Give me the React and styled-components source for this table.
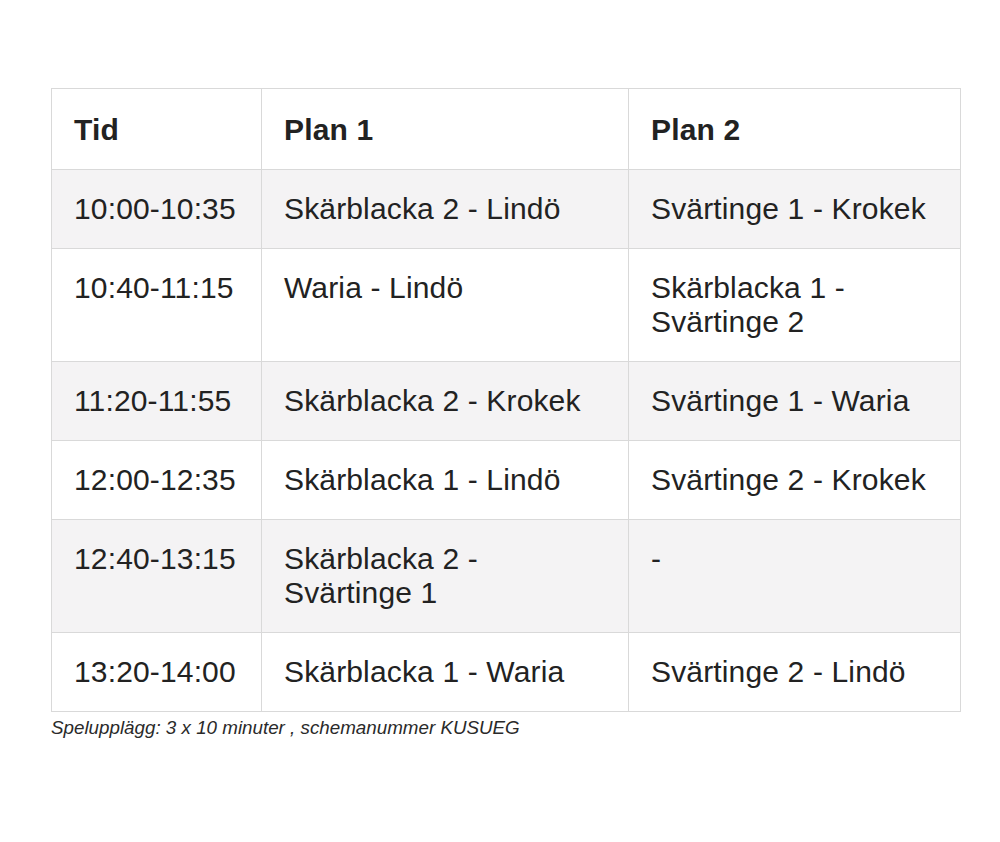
import React from 'react'
import styled, { createGlobalStyle } from 'styled-components'

const GlobalStyle = createGlobalStyle`
  html, body {
    margin: 0;
    padding: 0;
    background: #ffffff;
  }
  body {
    font-family: "Liberation Sans", Arial, sans-serif;
    color: #222222;
  }
`

const Page = styled.div`
  width: 1000px;
  height: 842px;
  padding: 88px 40px 0 51px;
  box-sizing: border-box;
`

const Table = styled.table`
  width: 909px;
  border-collapse: collapse;
  table-layout: fixed;
`

const Row = styled.tr`
  background: ${props => props.shaded ? '#f4f3f4' : '#ffffff'};
`

const HeadCell = styled.th`
  border: 1px solid #d9d9d9;
  padding: 24px 22px 22px;
  font-size: 30px;
  line-height: 34px;
  letter-spacing: 0.15px;
  font-weight: bold;
  text-align: left;
  vertical-align: top;
`

const Cell = styled.td`
  border: 1px solid #d9d9d9;
  padding: 22px 22px;
  font-size: 30px;
  line-height: 34px;
  letter-spacing: 0.15px;
  text-align: left;
  vertical-align: top;
`

const Caption = styled.p`
  margin: 5px 0 0;
  font-size: 18.8px;
  font-style: italic;
  color: #2a2a2a;
`

const matches = [
  ['10:00-10:35', 'Skärblacka 2 - Lindö', 'Svärtinge 1 - Krokek'],
  ['10:40-11:15', 'Waria - Lindö', 'Skärblacka 1 - Svärtinge 2'],
  ['11:20-11:55', 'Skärblacka 2 - Krokek', 'Svärtinge 1 - Waria'],
  ['12:00-12:35', 'Skärblacka 1 - Lindö', 'Svärtinge 2 - Krokek'],
  ['12:40-13:15', 'Skärblacka 2 - Svärtinge 1', '-'],
  ['13:20-14:00', 'Skärblacka 1 - Waria', 'Svärtinge 2 - Lindö']
]

const App = () =>
  <Page>
    <GlobalStyle />
    <Table>
      <colgroup>
        <col style={{ width: 210 }} />
        <col style={{ width: 367 }} />
        <col style={{ width: 332 }} />
      </colgroup>
      <thead>
        <Row>
          <HeadCell>Tid</HeadCell>
          <HeadCell>Plan 1</HeadCell>
          <HeadCell>Plan 2</HeadCell>
        </Row>
      </thead>
      <tbody>
        {matches.map((m, i) =>
          <Row key={m[0]} shaded={i % 2 === 0}>
            <Cell>{m[0]}</Cell>
            <Cell>{m[1]}</Cell>
            <Cell>{m[2]}</Cell>
          </Row>
        )}
      </tbody>
    </Table>
    <Caption>Spelupplägg: 3 x 10 minuter , schemanummer KUSUEG</Caption>
  </Page>

export default App
